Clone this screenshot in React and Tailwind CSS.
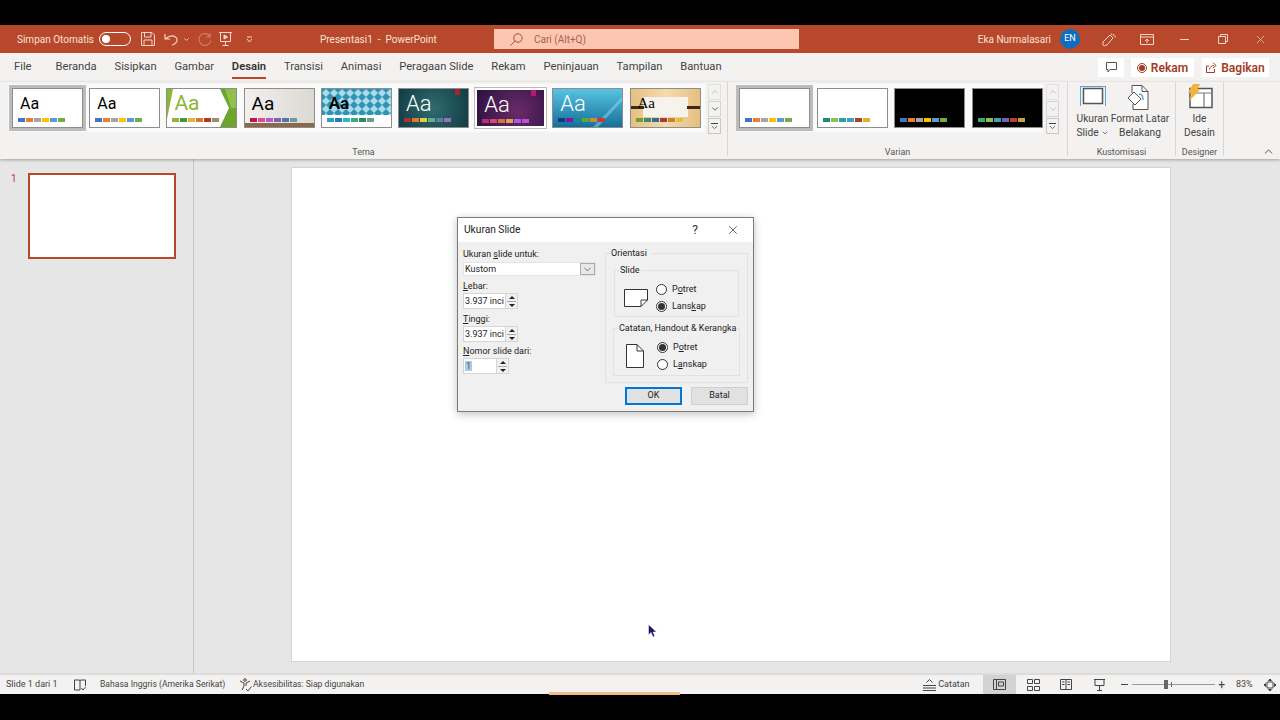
import React from "react";
import { ChevronDown, ChevronUp, X } from "lucide-react";

const tabs = ["Beranda", "Sisipkan", "Gambar", "Desain", "Transisi", "Animasi", "Peragaan Slide", "Rekam", "Peninjauan", "Tampilan", "Bantuan"];

const office = ["#4472c4", "#ed7d31", "#a5a5a5", "#ffc000", "#5b9bd5", "#70ad47"];

const themes = [
  { bars: office, selected: true },
  { bars: office },
  { bars: ["#90b63a", "#3e9a3e", "#e0b53a", "#d9792a", "#b8341e", "#9a8f6a"], text: "text-[#8ab833] text-[21px]", art: "green" },
  { bars: ["#b5194d", "#e04a8e", "#b05ad0", "#8060b0", "#5a70b0", "#6a9aa8"], bg: "bg-gradient-to-r from-[#f3efec] to-[#dcd8d4]", art: "wood", text: "text-black text-[19px]" },
  { bars: ["#2aa0c8", "#2a78b0", "#30b8c0", "#40a880", "#2a8a60", "#6aa090"], art: "pattern", text: "text-black font-semibold text-[17px]" },
  { bars: ["#b03030", "#d87a2a", "#e8c83a", "#6aa88a", "#5a80a0", "#9a70b0"], bg: "bg-[radial-gradient(circle_at_50%_50%,#2f6b70,#123c44)]", text: "text-white font-light text-[22px]", flag: "bg-[#a8242c]" },
  { bars: ["#c02a6a", "#d04a7a", "#d8703a", "#e0a04a", "#a060e0", "#c050d0"], bg: "bg-[radial-gradient(circle_at_60%_60%,#6b2a6a,#2a123f)]", text: "text-white font-light text-[22px]", flag: "bg-[#b01a70]", white: true },
  { bars: ["#123a7a", "#7a1a9a", "#1a8a8a", "#5aa83a", "#d08a3a", "#c83a3a"], bg: "bg-gradient-to-b from-[#58c4e0] to-[#12709c]", text: "text-white font-light text-[22px]", art: "shine" },
  { bars: ["#7a9a3a", "#3a8a7a", "#3a6a9a", "#a83a3a", "#d0802a", "#e0c040"], bg: "bg-gradient-to-r from-[#e6bf80] via-[#f3dcb0] to-[#e6bf80]", text: "text-black text-[15px] font-['Liberation_Serif',serif]", art: "tan" },
];

const variants = [
  { bars: office, selected: true, hideAa: true },
  { bars: ["#1f8a70", "#8fbf4f", "#2aa0a8", "#3f9fc0", "#a5452a", "#e0b030"], hideAa: true },
  { bars: office, bg: "bg-black", hideAa: true },
  { bars: ["#3fa77a", "#8fbf4f", "#3fa0b0", "#7a5fc0", "#b5452a", "#c8a040"], bg: "bg-black", hideAa: true },
];

function ThumbArt({ art }) {
  if (art === "green") {
    return (
      <svg className="absolute inset-0" width="69" height="38" viewBox="0 0 69 38">
        <polygon points="0,0 6,0 0,30" fill="#8ab833" />
        <polygon points="53,0 69,0 69,38 53,38 62,19" fill="#6da52c" />
        <polygon points="58,0 69,0 69,19 64,19" fill="#90bf4a" />
      </svg>
    );
  }
  if (art === "wood") {
    return <div className="absolute bottom-0 left-0 right-0 h-1 bg-[#8a6a4a]" />;
  }
  if (art === "pattern") {
    return (
      <svg className="absolute inset-0" width="69" height="38" viewBox="0 0 69 38">
        <defs>
          <pattern id="dots" width="8" height="8" patternUnits="userSpaceOnUse">
            <rect width="8" height="8" fill="#2f93b4" />
            <polygon points="4,0 8,4 4,8 0,4" fill="#a9dbe9" />
          </pattern>
        </defs>
        <rect width="69" height="26" fill="url(#dots)" />
      </svg>
    );
  }
  if (art === "shine") {
    return (
      <svg className="absolute inset-0" width="69" height="38" viewBox="0 0 69 38">
        <polygon points="40,38 69,8 69,12 45,38" fill="#8fdcec" opacity="0.5" />
      </svg>
    );
  }
  if (art === "tan") {
    return (
      <>
        <div className="absolute left-[12px] right-[12px] top-[8px] h-5 bg-[#f5f3ec]" />
        <div className="absolute left-0 top-[17px] w-[13px] h-[3px] bg-[#3d2a14]" />
        <div className="absolute right-0 top-[17px] w-[13px] h-[3px] bg-[#3d2a14]" />
      </>
    );
  }
  return null;
}

function Thumb({ bars, selected, bg = "bg-white", text = "text-black text-[16px]", art, flag, white, hideAa }) {
  return (
    <div className={`relative w-[71px] h-10 shrink-0 border border-[#8d8d8d] overflow-hidden ${bg} ${selected ? "outline-[3px] outline-[#bcbcbc]" : ""} ${white ? "border-2 border-white outline outline-[#bbb]" : ""}`}>
      <ThumbArt art={art} />
      {flag && <div className={`absolute right-2 top-0 w-[5px] h-[6px] ${flag}`} />}
      <div className="relative flex flex-col pl-[5px] h-full">
        <div className={`h-[29px] pl-[2px] leading-[29px] whitespace-nowrap ${text} ${hideAa ? "invisible" : ""}`}>Aa</div>
        <div className="flex gap-px">
          {bars.map((c, i) => (
            <span key={i} className="w-[7px] h-1" style={{ backgroundColor: c }} />
          ))}
        </div>
      </div>
    </div>
  );
}

function GalleryScroll({ downActive }) {
  return (
    <div className="flex flex-col gap-px w-[13px] ml-[3px] text-[#444]">
      <div className="h-4 border border-[#e0e0e0] flex items-center justify-center text-[#bbb]"><ChevronUp size={10} /></div>
      <div className={`h-4 border border-[#d4d4d4] flex items-center justify-center ${downActive ? "" : "text-[#bbb]"}`}><ChevronDown size={10} /></div>
      <div className="h-4 border border-[#c8c8c8] flex flex-col items-center justify-center">
        <span className="w-[7px] h-px bg-[#444] mb-px" />
        <ChevronDown size={9} className="-my-0.5" />
      </div>
    </div>
  );
}

function Group({ label, className, children }) {
  return (
    <div className={`flex flex-col border-r border-[#d6d6d6] mb-[3px] shrink-0 ${className}`}>
      <div className="h-[64px] shrink-0">{children}</div>
      <div className="text-center text-[9px] leading-[12px] text-[#555] shrink-0">{label}</div>
    </div>
  );
}

function Radio({ checked, children }) {
  return (
    <div className="flex items-center gap-[5px] h-[17px]">
      <span className="w-[11px] h-[11px] rounded-full border border-[#333] bg-white flex items-center justify-center">
        {checked && <span className="w-[7px] h-[7px] rounded-full bg-[#333]" />}
      </span>
      <span className="text-[9px] text-[#222]">{children}</span>
    </div>
  );
}

function SpinButtons() {
  return (
    <div className="w-[12px] h-full flex flex-col bg-[#f0f0f0] border-l border-[#d5d5d5] shrink-0 items-center justify-center gap-[2px]">
      <span className="w-0 h-0 border-x-[3px] border-x-transparent border-b-[3px] border-b-[#222]" />
      <span className="w-[9px] h-px bg-[#aaa]" />
      <span className="w-0 h-0 border-x-[3px] border-x-transparent border-t-[3px] border-t-[#222]" />
    </div>
  );
}

function Spin({ value }) {
  return (
    <div className="flex h-4 w-[55px] border border-[#d5d5d5] bg-white items-center">
      <span className="flex-1 pl-px text-[9px] leading-none text-[#222] whitespace-nowrap">{value}</span>
      <SpinButtons />
    </div>
  );
}

function Dialog() {
  return (
    <div className="absolute left-[457px] top-[217px] w-[297px] h-[195px] bg-[#f0f0f0] border border-[#7a7a7a] shadow-[0_2px_8px_rgba(0,0,0,0.25)] flex flex-col text-[#222]">
      <div className="h-6 bg-white flex items-center pl-[6px] shrink-0">
        <span className="flex-1 text-[10.2px]">Ukuran Slide</span>
        <span className="text-[12px] mr-[28px] text-[#333]">?</span>
        <X size={14} strokeWidth={1.25} className="mr-[13px] text-[#333]" />
      </div>
      <div className="flex flex-1 pl-[5px] pr-[5px] pt-[6px]">
        <div className="w-[133px] text-[9px] leading-[12px] mr-[9px]">
          <div className="h-[12px]">Ukuran <u>s</u>lide untuk:</div>
          <div className="mt-[2px] h-[14px] bg-white border border-[#e4e4e4] flex items-center justify-between pl-px">
            <span>Kustom</span>
            <span className="w-[15px] h-full border border-[#aaa] bg-[#e8e8e8] flex items-center justify-center"><ChevronDown size={11} strokeWidth={1.25} /></span>
          </div>
          <div className="mt-[3px] h-[14px] leading-[14px]"><u>L</u>ebar:</div>
          <Spin value="3.937 inci" />
          <div className="mt-[3px] h-[14px] leading-[14px]"><u>T</u>inggi:</div>
          <Spin value="3.937 inci" />
          <div className="mt-[2px] h-[14px] leading-[14px]"><u>N</u>omor slide dari:</div>
          <div className="flex h-4 w-[46px] border border-[#d5d5d5] bg-white items-center">
            <span className="flex-1 pl-px"><span className="bg-[#a9cbe8] px-px text-[#456]">1</span></span>
            <SpinButtons />
          </div>
        </div>
        <div className="flex-1 flex flex-col">
          <fieldset className="border border-[#e2e2e2] h-[135px] px-2 pt-[6px]">
            <legend className="text-[9px] -ml-[3px] pr-1 leading-[11px]">Orientasi</legend>
            <fieldset className="border border-[#e2e2e2] h-[52px] pl-[9px] pt-[5px]">
              <legend className="text-[9px] leading-[11px] px-px -ml-[5px]">Slide</legend>
              <div className="flex items-center gap-[8px]">
                <svg width="24" height="18" viewBox="0 0 24 18" fill="none" stroke="#333" strokeWidth="1">
                  <path d="M0.5 0.5H23.5V11L17 17.5H0.5Z" fill="#fff" />
                  <path d="M17 17.5V11H23.5" />
                </svg>
                <div className="flex flex-col">
                  <Radio>P<u>o</u>tret</Radio>
                  <Radio checked>Lans<u>k</u>ap</Radio>
                </div>
              </div>
            </fieldset>
            <fieldset className="border border-[#e2e2e2] h-[53px] pl-[12px] pt-[5px] mt-[6px] -mx-[1px]">
              <legend className="text-[9px] leading-[11px] -ml-[7px] -mr-2 whitespace-nowrap">Catatan, Handout &amp; Kerangka</legend>
              <div className="flex items-center gap-[13px]">
                <svg width="18" height="24" viewBox="0 0 18 24" fill="none" stroke="#333" strokeWidth="1">
                  <path d="M0.5 0.5H11L17.5 7V23.5H0.5Z" fill="#fff" />
                  <path d="M11 0.5V7H17.5" />
                </svg>
                <div className="flex flex-col">
                  <Radio checked>P<u>o</u>tret</Radio>
                  <Radio>L<u>a</u>nskap</Radio>
                </div>
              </div>
            </fieldset>
          </fieldset>
          <div className="flex justify-end gap-[9px] mt-1">
            <button className="w-[57px] h-[18px] bg-[#e1e1e1] border-2 border-[#0078d7] text-[9px]">OK</button>
            <button className="w-[57px] h-[18px] bg-[#e1e1e1] border border-[#d0d0d0] text-[9px]">Batal</button>
          </div>
        </div>
      </div>
    </div>
  );
}

function TitleBar() {
  return (
    <div className="h-[28px] bg-[#b8482b] flex items-center text-[#f8e0d7] text-[10px] shrink-0">
      <span className="ml-[17px] w-[82px] whitespace-nowrap">Simpan Otomatis</span>
      <span className="w-[32px] h-[14px] rounded-full border border-white flex items-center pl-[2px]">
        <span className="w-2 h-2 rounded-full bg-white" />
      </span>
      <svg className="ml-[10px]" width="14" height="14" viewBox="0 0 14 14" fill="none" stroke="#f3d5ca" strokeWidth="1">
        <path d="M0.5 0.5H11L13.5 3V13.5H0.5Z" />
        <path d="M3.5 0.5V5H10V0.5M3 13.5V8H11V13.5" />
      </svg>
      <svg className="ml-[9px]" width="14" height="14" viewBox="0 0 14 14" fill="none" stroke="#f3d5ca" strokeWidth="1.2">
        <path d="M1 2V7H6M1.5 7C5 3 11 2.5 13 7C13.5 10 11 12.5 8 13" />
      </svg>
      <ChevronDown className="ml-[5px] text-[#f3d5ca]" size={7} strokeWidth={3} />
      <svg className="ml-[8px] opacity-40" width="14" height="14" viewBox="0 0 14 14" fill="none" stroke="#f3d5ca" strokeWidth="1.1">
        <path d="M12 1V5H8M12 4.5C9 0 2 1 1 6.5C0.5 10 3.5 13.5 7 13.5C10 13.5 12.5 11 13 8.5" />
      </svg>
      <svg className="ml-[7px]" width="13" height="14" viewBox="0 0 13 14" fill="none" stroke="#f3d5ca" strokeWidth="1">
        <path d="M0 0.5H13M1.5 0.5V9.5H11.5V0.5M6.5 9.5V13.5M3.5 13.5H9.5" />
        <path d="M5 3V7L8.5 5Z" fill="#f3d5ca" />
      </svg>
      <svg className="ml-[14px]" width="7" height="7" viewBox="0 0 7 7" fill="none" stroke="#f3d5ca" strokeWidth="1">
        <path d="M1 1H6M1 3L3.5 6L6 3" />
      </svg>
      <span className="ml-[67px] w-[174px] whitespace-nowrap">Presentasi1&nbsp; -&nbsp; PowerPoint</span>
      <div className="w-[305px] h-5 bg-[#fdc6b0] flex items-center text-[#a8604a]">
        <svg className="ml-[16px]" width="13" height="13" viewBox="0 0 13 13" fill="none" stroke="#a8503a" strokeWidth="1">
          <circle cx="8" cy="5" r="4.2" />
          <path d="M5 8L0.5 12.5" />
        </svg>
        <span className="ml-[11px]">Cari (Alt+Q)</span>
      </div>
      <div className="flex-1" />
      <span className="whitespace-nowrap">Eka Nurmalasari</span>
      <span className="ml-[9px] w-5 h-5 rounded-full bg-[#106ebe] text-white text-[9px] flex items-center justify-center">EN</span>
      <svg className="ml-[22px]" width="15" height="15" viewBox="0 0 15 15" fill="none" stroke="#f3d5ca" strokeWidth="1">
        <path d="M1 10L8 3L11 6L5 13C3 14 1 14 1 13Z M9.5 1.5L10 3M12 2L11.5 4M14 4.5L12.5 5" />
      </svg>
      <svg className="ml-[23px]" width="14" height="11" viewBox="0 0 14 11" fill="none" stroke="#f3d5ca" strokeWidth="1">
        <path d="M0.5 0.5H13.5V10.5H0.5ZM0.5 3H13.5" />
        <path d="M7 9V5M5 7L7 5L9 7" />
      </svg>
      <span className="ml-[26px] w-[9px] h-px bg-[#f3d5ca]" />
      <svg className="ml-[29px]" width="10" height="10" viewBox="0 0 10 10" fill="none" stroke="#f3d5ca" strokeWidth="1">
        <path d="M0.5 2.5H7.5V9.5H0.5ZM2.5 2.5V0.5H9.5V7.5H7.5" />
      </svg>
      <X className="ml-[26px] mr-[13px] text-[#f3d5ca]" size={13} strokeWidth={1.25} />
    </div>
  );
}

function TabRow() {
  return (
    <div className="h-[29px] flex items-center text-[11.2px] text-[#444] shrink-0">
      <span className="ml-[14px] mr-[24px]">File</span>
      <div className="flex gap-[17.8px]">
        {tabs.map((t) => (
          <span key={t} className={`relative whitespace-nowrap ${t === "Desain" ? "font-semibold text-[#333]" : ""}`}>
            {t}
            {t === "Desain" && <span className="absolute left-0 right-0 -bottom-[3px] h-[2px] bg-[#b7472a]" />}
          </span>
        ))}
      </div>
      <div className="flex-1" />
      <div className="w-[26px] h-[19px] bg-white flex items-center justify-center mr-[7px]">
        <svg width="11" height="11" viewBox="0 0 11 11" fill="none" stroke="#555" strokeWidth="1">
          <path d="M0.5 0.5H10.5V7.5H4L2 10V7.5H0.5Z" />
        </svg>
      </div>
      <div className="w-[63px] h-[19px] bg-white flex items-center justify-center gap-1 mr-2 font-semibold text-[#a03d25] text-[12px]">
        <span className="w-[10px] h-[10px] rounded-full border border-[#a03d25] flex items-center justify-center"><span className="w-[6px] h-[6px] rounded-full bg-[#a03d25]" /></span>
        Rekam
      </div>
      <div className="w-[67px] h-[19px] bg-white flex items-center justify-center gap-1 mr-[11px] font-semibold text-[#a03d25] text-[12px]">
        <svg width="11" height="11" viewBox="0 0 11 11" fill="none" stroke="#a03d25" strokeWidth="1">
          <path d="M3 4H0.5V10.5H8.5V7M3.5 7.5C4 4.5 6 3.5 8 3.5M7 0.5L10 3.5L7 6" />
        </svg>
        Bagikan
      </div>
    </div>
  );
}

function Ribbon() {
  return (
    <div className="h-[77px] flex shrink-0 shadow-[0_1px_3px_rgba(0,0,0,0.3)] relative">
      <Group label="Tema" className="w-[728px]">
        <div className="flex items-start pl-2 pt-[2px]">
          <div className="flex items-center gap-[6.2px] h-[48px] bg-[#fafafa] pl-1 pr-[3px] w-[697px]">
            {themes.map((t, i) => <Thumb key={i} {...t} />)}
          </div>
          <GalleryScroll downActive />
        </div>
      </Group>
      <Group label="Varian" className="w-[340px]">
        <div className="flex items-start pl-2 pt-[2px]">
          <div className="flex items-center gap-[6.5px] h-[48px] bg-[#fafafa] pl-[3px] w-[307px]">
            {variants.map((t, i) => <Thumb key={i} {...t} />)}
          </div>
          <GalleryScroll />
        </div>
      </Group>
      <Group label="Kustomisasi" className="w-[108px]">
        <div className="flex text-[10.2px] leading-[14px] text-[#444] text-center pt-[3px]">
          <div className="w-[47px] ml-[1px] flex flex-col items-center">
            <svg width="26" height="22" viewBox="0 0 26 22" fill="none">
              <path d="M0.5 1V21M25.5 1V21M0.5 1.5H25.5" stroke="#5ba3d0" strokeWidth="1" />
              <rect x="3.5" y="3.5" width="19" height="15" fill="#fff" stroke="#555" strokeWidth="1.5" />
            </svg>
            <span className="mt-[5px] whitespace-nowrap">Ukuran</span>
            <span className="flex items-center whitespace-nowrap">Slide<ChevronDown size={8} strokeWidth={2} className="ml-[2px]" /></span>
          </div>
          <div className="w-[60px] -ml-[6px] flex flex-col items-center">
            <svg className="mr-[4px]" width="22" height="25" viewBox="0 0 22 25" fill="none" stroke="#555" strokeWidth="1">
              <path d="M5 8V0.5H15L21 6.5V24.5H6V19" fill="#fff" />
              <path d="M15 0.5V6.5H21" />
              <path d="M1 13L7 7L14 14L8 20Z" fill="#fff" />
              <path d="M12 9C15 9 16 12 16 15" stroke="#5ba3d0" strokeWidth="1.5" />
            </svg>
            <span className="mt-[2px] whitespace-nowrap">Format Latar</span>
            <span>Belakang</span>
          </div>
        </div>
      </Group>
      <Group label="Designer" className="w-[48px]">
        <div className="flex flex-col items-center text-[10.2px] leading-[14px] text-[#444] pt-[2px]">
          <svg width="26" height="25" viewBox="0 0 26 25" fill="none">
            <rect x="3" y="4.5" width="22" height="19" fill="#fff" stroke="#555" strokeWidth="1.5" />
            <path d="M3 9H25M17 9V23" stroke="#777" strokeWidth="1.2" />
            <path d="M6 0H13L10 6H13L2 17L5 9H1Z" fill="#f5b335" />
          </svg>
          <span className="mt-[3px]">Ide</span>
          <span>Desain</span>
        </div>
      </Group>
      <div className="flex-1 flex items-end justify-end pr-[5px] pb-[1px]">
        <ChevronUp size={13} strokeWidth={1.5} className="text-[#333]" />
      </div>
    </div>
  );
}

function StatusBar() {
  return (
    <div className="h-[21px] bg-[#f3f2f1] border-t-2 border-[#dcdcdc] flex items-center text-[9px] text-[#444] shrink-0">
      <span className="ml-[6px] w-[51px] whitespace-nowrap">Slide 1 dari 1</span>
      <svg className="ml-[17px]" width="12" height="12" viewBox="0 0 12 12" fill="none" stroke="#444" strokeWidth="1">
        <path d="M0.5 1H5.5L6 2L6.5 1H11.5V7M6 2V11H0.5V1M7.5 9L9 11L11.5 8" />
      </svg>
      <span className="ml-[14px] w-[125px] text-[8.6px] whitespace-nowrap">Bahasa Inggris (Amerika Serikat)</span>
      <svg className="ml-[14px]" width="13" height="13" viewBox="0 0 13 13" fill="none" stroke="#444" strokeWidth="1">
        <circle cx="6" cy="2" r="1.3" />
        <path d="M1 3L5 5V8L3 12M11 3L7 5V8M7 11L9 13L12.5 8.5" />
      </svg>
      <span className="ml-px text-[8.6px] whitespace-nowrap">Aksesibilitas: Siap digunakan</span>
      <div className="flex-1" />
      <svg width="13" height="13" viewBox="0 0 13 13" fill="none" stroke="#444" strokeWidth="1">
        <path d="M0 7.5H13M0 10H13M0 12.5H13M3.5 4.5L6.5 1.5L9.5 4.5" />
      </svg>
      <span className="ml-[2px] w-[30px] mr-[15px] whitespace-nowrap">Catatan</span>
      <div className="w-[33px] h-[19px] bg-[#d2d2d2] flex items-center justify-center">
        <svg width="13" height="11" viewBox="0 0 13 11" fill="none" stroke="#444" strokeWidth="1">
          <path d="M0.5 0.5H12.5V10.5H0.5ZM3.5 0.5V10.5M5.5 3H10.5V7H5.5Z" />
        </svg>
      </div>
      <svg className="ml-[11px]" width="13" height="12" viewBox="0 0 13 12" fill="none" stroke="#444" strokeWidth="1">
        <path d="M0.5 0.5H5.5V4.5H0.5ZM7.5 0.5H12.5V4.5H7.5ZM0.5 7.5H5.5V11.5H0.5ZM7.5 7.5H12.5V11.5H7.5Z" />
      </svg>
      <svg className="ml-[20px]" width="12" height="11" viewBox="0 0 12 11" fill="none" stroke="#444" strokeWidth="1">
        <path d="M0.5 0.5H11.5V10.5H0.5ZM6 0.5V10.5M2 3H4.5M2 5.5H4.5M7.5 3H10M7.5 5.5H10" />
      </svg>
      <svg className="ml-[22px]" width="11" height="12" viewBox="0 0 11 12" fill="none" stroke="#444" strokeWidth="1">
        <path d="M0 0.5H11M1 0.5V6.5H10V0.5M5.5 6.5V11.5M3 11.5H8" />
      </svg>
      <span className="ml-[16px] w-[7px] h-px bg-[#444]" />
      <div className="ml-[4px] w-[83px] h-px bg-[#999] flex items-center">
        <span className="ml-[32px] w-1 h-[9px] bg-[#666]" />
        <span className="ml-[3px] w-px h-[5px] bg-[#666]" />
      </div>
      <span className="ml-[3px] text-[12px] leading-none">+</span>
      <span className="ml-[11px] w-[17px] whitespace-nowrap">83%</span>
      <svg className="ml-[11px] mr-[4px]" width="12" height="12" viewBox="0 0 12 12" fill="none" stroke="#444" strokeWidth="1">
        <path d="M3 3H9V9H3ZM6 0L4.5 1.5H7.5ZM6 12L4.5 10.5H7.5ZM0 6L1.5 4.5V7.5ZM12 6L10.5 4.5V7.5Z" />
      </svg>
    </div>
  );
}

export default function App() {
  return (
    <div className="relative w-[1280px] h-[720px] bg-black overflow-hidden font-['Roboto',sans-serif]">
      <div className="h-[25px]" />
      <div className="h-[669px] flex flex-col bg-[#f3f2f1]">
        <TitleBar />
        <TabRow />
        <Ribbon />
        <div className="flex-1 flex bg-[#e6e6e6] min-h-0">
          <div className="w-[194px] border-r border-[#c6c6c6] flex pt-[14px] shrink-0">
            <span className="ml-[11px] w-[17px] text-[10px] leading-[12px] text-[#b7472a]">1</span>
            <div className="w-[148px] h-[86px] bg-white border-2 border-[#b7472a]" />
          </div>
          <div className="flex-1 flex justify-center pt-[8px] pr-[13px]">
            <div className="w-[880px] h-[495px] bg-white border border-[#d4d4d4]" />
          </div>
        </div>
        <StatusBar />
      </div>
      <div className="h-[26px]" />
      <div className="absolute left-[549px] top-[692px] w-[131px] h-[3px] bg-[#f0bd8a]" />
      <Dialog />
      <svg className="absolute left-[648px] top-[624px]" width="9" height="14" viewBox="0 0 9 14">
        <path d="M0.5 0.5V11L3 8.5L5 13L6.8 12L5 8H8.5Z" fill="#1c1464" stroke="#fff" strokeWidth="0.5" />
      </svg>
    </div>
  );
}
